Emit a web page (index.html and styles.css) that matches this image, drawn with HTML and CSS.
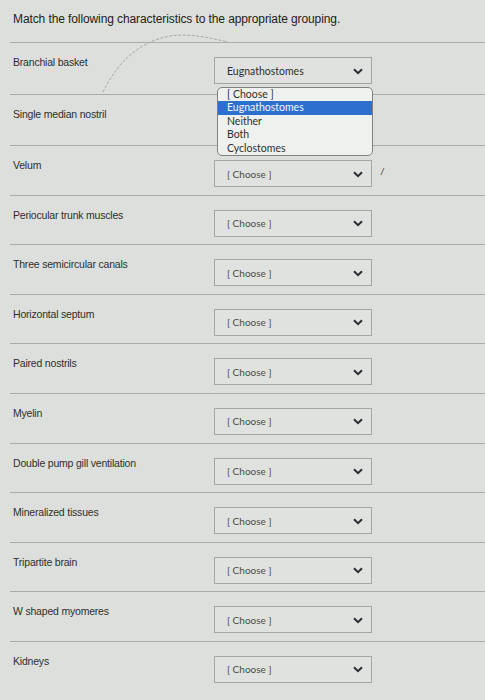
FILE: index.html
```html
<!DOCTYPE html>
<html>
<head>
<meta charset="utf-8">
<link rel="stylesheet" href="styles.css">
</head>
<body>
<div class="page">
  <h1 class="title">Match the following characteristics to the appropriate grouping.</h1>
  <svg class="pen" width="240" height="100" viewBox="0 0 240 100"><path d="M103 92 C 118 62, 138 42, 170 36 C 190 33, 210 38, 228 42" fill="none" stroke="#9a9c9a" stroke-width="0.8" stroke-dasharray="3 1.5"/></svg>
  <div class="rows">
    <div class="row r1">
      <div class="label">Branchial basket</div>
      <div class="select-wrap">
        <div class="select"><span class="val">Eugnathostomes</span><svg class="chev" width="10" height="7" viewBox="0 0 10 7"><path d="M1 1.2 L5 5.2 L9 1.2" fill="none" stroke="#2a2d33" stroke-width="2"/></svg></div>
        <ul class="list">
          <li>[ Choose ]</li>
          <li class="sel">Eugnathostomes</li>
          <li>Neither</li>
          <li>Both</li>
          <li>Cyclostomes</li>
        </ul>
      </div>
    </div>
    <div class="row r2">
      <div class="label">Single median nostril</div>
    </div>
    <div class="row">
      <div class="label">Velum</div>
      <div class="select-wrap"><div class="select"><span class="val">[ Choose ]</span><svg class="chev" width="10" height="7" viewBox="0 0 10 7"><path d="M1 1.2 L5 5.2 L9 1.2" fill="none" stroke="#2a2d33" stroke-width="2"/></svg></div><span class="tick">/</span></div>
    </div>
    <div class="row">
      <div class="label">Periocular trunk muscles</div>
      <div class="select-wrap"><div class="select"><span class="val">[ Choose ]</span><svg class="chev" width="10" height="7" viewBox="0 0 10 7"><path d="M1 1.2 L5 5.2 L9 1.2" fill="none" stroke="#2a2d33" stroke-width="2"/></svg></div></div>
    </div>
    <div class="row">
      <div class="label">Three semicircular canals</div>
      <div class="select-wrap"><div class="select"><span class="val">[ Choose ]</span><svg class="chev" width="10" height="7" viewBox="0 0 10 7"><path d="M1 1.2 L5 5.2 L9 1.2" fill="none" stroke="#2a2d33" stroke-width="2"/></svg></div></div>
    </div>
    <div class="row">
      <div class="label">Horizontal septum</div>
      <div class="select-wrap"><div class="select"><span class="val">[ Choose ]</span><svg class="chev" width="10" height="7" viewBox="0 0 10 7"><path d="M1 1.2 L5 5.2 L9 1.2" fill="none" stroke="#2a2d33" stroke-width="2"/></svg></div></div>
    </div>
    <div class="row">
      <div class="label">Paired nostrils</div>
      <div class="select-wrap"><div class="select"><span class="val">[ Choose ]</span><svg class="chev" width="10" height="7" viewBox="0 0 10 7"><path d="M1 1.2 L5 5.2 L9 1.2" fill="none" stroke="#2a2d33" stroke-width="2"/></svg></div></div>
    </div>
    <div class="row">
      <div class="label">Myelin</div>
      <div class="select-wrap"><div class="select"><span class="val">[ Choose ]</span><svg class="chev" width="10" height="7" viewBox="0 0 10 7"><path d="M1 1.2 L5 5.2 L9 1.2" fill="none" stroke="#2a2d33" stroke-width="2"/></svg></div></div>
    </div>
    <div class="row">
      <div class="label">Double pump gill ventilation</div>
      <div class="select-wrap"><div class="select"><span class="val">[ Choose ]</span><svg class="chev" width="10" height="7" viewBox="0 0 10 7"><path d="M1 1.2 L5 5.2 L9 1.2" fill="none" stroke="#2a2d33" stroke-width="2"/></svg></div></div>
    </div>
    <div class="row">
      <div class="label">Mineralized tissues</div>
      <div class="select-wrap"><div class="select"><span class="val">[ Choose ]</span><svg class="chev" width="10" height="7" viewBox="0 0 10 7"><path d="M1 1.2 L5 5.2 L9 1.2" fill="none" stroke="#2a2d33" stroke-width="2"/></svg></div></div>
    </div>
    <div class="row">
      <div class="label">Tripartite brain</div>
      <div class="select-wrap"><div class="select"><span class="val">[ Choose ]</span><svg class="chev" width="10" height="7" viewBox="0 0 10 7"><path d="M1 1.2 L5 5.2 L9 1.2" fill="none" stroke="#2a2d33" stroke-width="2"/></svg></div></div>
    </div>
    <div class="row">
      <div class="label">W shaped myomeres</div>
      <div class="select-wrap"><div class="select"><span class="val">[ Choose ]</span><svg class="chev" width="10" height="7" viewBox="0 0 10 7"><path d="M1 1.2 L5 5.2 L9 1.2" fill="none" stroke="#2a2d33" stroke-width="2"/></svg></div></div>
    </div>
    <div class="row">
      <div class="label">Kidneys</div>
      <div class="select-wrap"><div class="select"><span class="val">[ Choose ]</span><svg class="chev" width="10" height="7" viewBox="0 0 10 7"><path d="M1 1.2 L5 5.2 L9 1.2" fill="none" stroke="#2a2d33" stroke-width="2"/></svg></div></div>
    </div>
  </div>
</div>
</body>
</html>
```
FILE: styles.css
```css
html, body {
  margin: 0;
  padding: 0;
  background: #dcdfdb;
}
.page {
  position: relative;
  width: 485px;
  height: 700px;
  overflow: hidden;
  font-family: "Liberation Sans", Arial, sans-serif;
  color: #2b2d2c;
}
.title {
  margin: 0;
  padding: 12px 0 0 13px;
  height: 42px;
  box-sizing: border-box;
  font-size: 12px;
  line-height: 14px;
  font-weight: normal;
  color: #1f2120;
  letter-spacing: -0.1px;
}
.pen {
  position: absolute;
  left: 0;
  top: 0;
}
.rows {
  margin-left: 10px;
}
.row {
  position: relative;
  box-sizing: border-box;
  height: 49.6px;
  border-top: 1px solid #a9aca8;
  display: grid;
  grid-template-columns: 204px 170px;
  padding-top: 13px;
}
.row.r1 { height: 52px; }
.row.r2 { height: 51px; }
.label {
  padding-left: 3px;
  font-size: 10.5px;
  color: #2e302f;
  letter-spacing: -0.2px;
  line-height: 13px;
}
.select-wrap {
  position: relative;
  padding-top: 1px;
}
.select {
  box-sizing: border-box;
  width: 158px;
  height: 27px;
  border: 1px solid #a3a6a2;
  background: #dfe2de;
  display: flex;
  align-items: center;
  justify-content: space-between;
  padding: 0 8px 0 12px;
  font-family: Lato, "Open Sans", sans-serif;
  font-size: 10px;
  color: #4a4c4b;
}
.r1 .select .val {
  color: #2f3130;
  font-size: 10.5px;
}
.chev {
  display: block;
  margin-top: 1px;
}
.tick {
  position: absolute;
  left: 167px;
  top: 8px;
  font-size: 9px;
  color: #333;
  font-style: italic;
}
.list {
  position: absolute;
  left: 3px;
  top: 31px;
  width: 156px;
  margin: 0;
  padding: 0;
  list-style: none;
  box-sizing: border-box;
  border: 1px solid #7f827f;
  border-radius: 5px;
  background: #eef1ee;
  font-family: Lato, "Open Sans", sans-serif;
  font-size: 10.5px;
  line-height: 13.4px;
  color: #2e302f;
  overflow: hidden;
  z-index: 2;
}
.list li {
  padding-left: 9px;
}
.list li.sel {
  background: #2c6fcf;
  color: #f4f7fb;
}
```
